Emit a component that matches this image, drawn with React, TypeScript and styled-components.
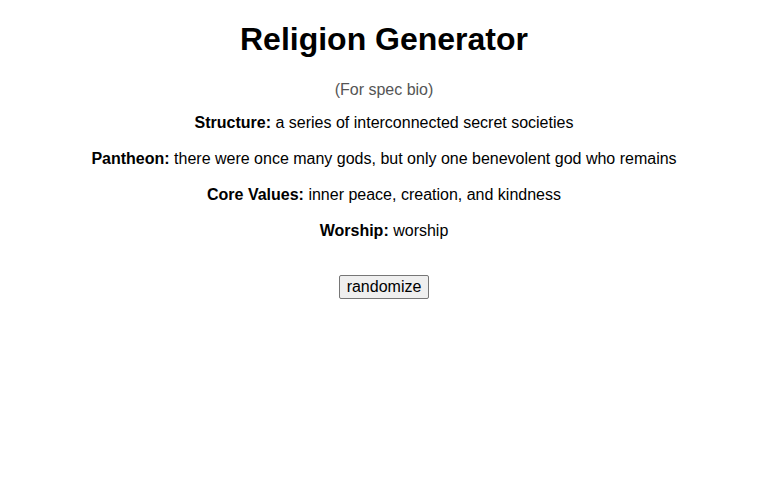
import React, { useState } from "react";
import styled, { createGlobalStyle } from "styled-components";

const Global = createGlobalStyle`
  body {
    margin: 0;
    background: #ffffff;
    font-family: "Liberation Sans", Arial, sans-serif;
    color: #000;
  }
`;

const Page = styled.main`
  display: flex;
  flex-direction: column;
  align-items: center;
  text-align: center;
  padding-top: 21px;
`;

const Title = styled.h1`
  margin: 0;
  font-size: 32px;
  font-weight: bold;
  line-height: 37px;
`;

const Subtitle = styled.p`
  margin: 23px 0 0;
  font-size: 16px;
  line-height: 18px;
  color: #555;
`;

const Trait = styled.p<{ $first?: boolean }>`
  margin: ${(p) => (p.$first ? "15px" : "18px")} 0 0;
  font-size: 16px;
  line-height: 18px;
`;

const Label = styled.strong`
  font-weight: bold;
`;

const Button = styled.button`
  margin-top: 35px;
  font-family: "Liberation Sans", Arial, sans-serif;
  font-size: 16px;
  line-height: 18px;
  padding: 2px 7px;
  background: #efefef;
  border: 1px solid #767676;
  border-radius: 2px;
  color: #000;
`;

const religion = {
  Structure: "a series of interconnected secret societies",
  Pantheon: "there were once many gods, but only one benevolent god who remains",
  "Core Values": "inner peace, creation, and kindness",
  Worship: "worship",
};

export default function App() {
  const [data] = useState(religion);
  return (
    <>
      <Global />
      <Page>
        <Title>Religion Generator</Title>
        <Subtitle>(For spec bio)</Subtitle>
        {Object.entries(data).map(([k, v], i) => (
          <Trait key={k} $first={i === 0}>
            <Label>{k}:</Label> {v}
          </Trait>
        ))}
        <Button>randomize</Button>
      </Page>
    </>
  );
}
